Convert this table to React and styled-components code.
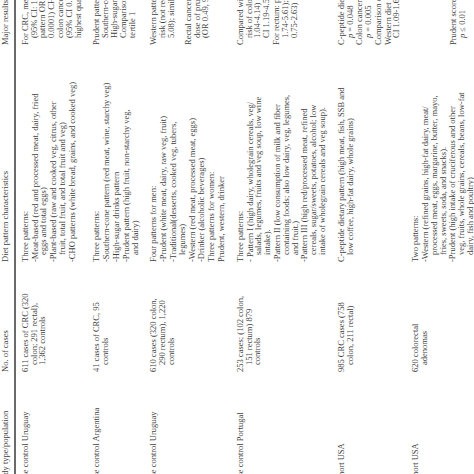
import React from 'react';
import styled, { createGlobalStyle } from 'styled-components';

const Global = createGlobalStyle`
  html, body { margin: 0; padding: 0; background: #fff; }
  body { width: 474px; height: 474px; overflow: hidden; }
`;

const Page = styled.div`
  width: 474px;
  height: 474px;
  overflow: hidden;
  background: #fff;
`;

const Rotated = styled.div`
  width: 640px;
  transform-origin: 0 0;
  transform: translate(-2px, 486px) rotate(-90deg);
  font-family: "Liberation Serif", "Times New Roman", serif;
  font-size: 8.5px;
  line-height: 8.8px;
  color: #3f3f3f;
`;

const Row = styled.div`
  display: grid;
  grid-template-columns: 114px 110px 217px 199px;
  padding: ${p => (p.$head ? '3px 0 4px' : '5px 0')};
  border-bottom: ${p => (p.$head ? '2px solid #6a6a6a' : 'none')};
`;

const Cell = styled.div`
  min-width: 0;
  padding-top: ${p => p.$offset || 0}px;
`;

const Para = styled.div`
  margin-top: ${p => (p.$first ? 0 : p.$gap)}px;
`;

const Line = styled.div`
  white-space: nowrap;
  padding-left: ${p => (p.$indent ? '7px' : '0')};
`;

const I = styled.i`
  font-style: italic;
`;

function Text({ paras, gap = 1 }) {
  return paras.map((lines, i) => (
    <Para key={i} $first={i === 0} $gap={gap}>
      {lines.map((l, j) => (
        <Line key={j} $indent={j > 0}>
          {l}
        </Line>
      ))}
    </Para>
  ));
}

const rows = [
  {
    study: [['Case control Uruguay']],
    cases: [['611 cases of CRC (320', 'colon; 291 rectal),', '1,362 controls']],
    diet: [
      ['Three patterns:'],
      ['-Meat-based (red and processed meat, dairy, fried', 'eggs and total eggs)'],
      ['-Plant-based (raw and cooked veg, citrus, other', 'fruit, total fruit, and total fruit and veg)'],
      ['-CHO patterns (white bread, grains, and cooked veg)'],
    ],
    major: [
      [
        'For CRC, meat-based pattern OR 1.32',
        '(95% CI: 1.05-1.66); plant-based',
        'pattern OR 0.56 (95% CI 0.44-0.71; p <',
        '0.0001) CHO pattern not associated;',
        'colon cancer: plant-based OR 0.52',
        '(95% CI 0.38-0.71) comparing',
        'highest quartile vs. lowest',
      ],
    ],
  },
  {
    study: [['Case control Argentina']],
    cases: [['41 cases of CRC, 95', 'controls']],
    diet: [
      ['Three patterns:'],
      ['-Southern-cone pattern (red meat, wine, starchy veg)'],
      ['-High-sugar drinks pattern'],
      ['-Prudent pattern (high fruit, non-starchy veg,', 'and dairy)'],
    ],
    major: [
      [
        'Prudent pattern protective (OR 0.29);',
        'Southern-cone pattern OR 1.25;',
        'High-sugar drinks OR 1.68;',
        'Comparison tertile 3 vs.',
        'tertile 1',
      ],
    ],
  },
  {
    study: [['Case control Uruguay']],
    cases: [['610 cases (320 colon,', '290 rectum), 1,220', 'controls']],
    diet: [
      ['Four patterns for men:'],
      ['-Prudent (white meat, dairy, raw veg, fruit)'],
      ['-Traditional(desserts, cooked veg, tubers,', 'legumes)'],
      ['-Western (red meat, processed meat, eggs)'],
      ['-Drinker (alcoholic beverages)'],
      ['Three patterns for women:'],
      ['Prudent, western, drinker'],
    ],
    majorGap: 8,
    major: [
      ['Western pattern increased rectal', 'risk (not rectal OR 2.05, 1.10-', '5.08); similar in women'],
      ['Rectal cancer: inverse', 'dose of prudent pattern', '(OR 0.49, 95% CI 0.29-0.83)'],
    ],
  },
  {
    study: [['Case control Portugal']],
    cases: [['253 cases; (102 colon,', '151 rectum) 879', 'controls']],
    diet: [
      ['Three patterns:'],
      ['- Pattern I (high dairy, wholegrain cereals, veg/', 'salads, legumes, fruits and veg soup, low wine', 'intake).'],
      ['-Pattern II (low consumption of milk and fiber', 'containing foods; also low dairy, veg, legumes,', 'and fruit.)'],
      ['-Pattern III (high red/processed meat, refined', 'cereals, sugar/sweets, potatoes, alcohol; low', 'intake of wholegrain cereals and veg soup).'],
    ],
    major: [
      [
        'Compared with pattern I, higher',
        'risk of colon cancer (OR 2.08, 95% CI',
        '1.04-4.14) pattern III (OR 2.33, 95%',
        'CI 1.19-4.57)',
      ],
      ['For rectum: pattern II (OR 3.12,', '1.74-5.61); pattern III (OR 1.41,', '0.75-2.63)'],
    ],
  },
  {
    study: [['Cohort USA']],
    cases: [['985 CRC cases (758', 'colon, 211 rectal)']],
    diet: [['C-peptide dietary pattern (high meat, fish, SSB and', 'low coffee, high-fat dairy, whole grains)']],
    major: [
      ['C-peptide dietary pattern RR 1.29,', <><I>p</I> = 0.048</>],
      ['Colon cancer RR 1.43,', <><I>p</I> = 0.005</>],
      ['Comparison of extreme quintiles'],
      ['Western diet and CRC RR 1.32 (95%', 'CI 1.09-1.60)'],
    ],
  },
  {
    study: [['Cohort USA']],
    cases: [['620 colorectal', 'adenomas']],
    diet: [
      ['Two patterns:'],
      ['-Western (refined grains, high-fat dairy, meat/', 'processed meat, eggs, margarine, butter, mayo,', 'fries, sweets, soda, and snacks).'],
      ['-Prudent (high intake of cruciferous and other', 'veg, fruits, whole grains, cereals, beans, low-fat', 'dairy, fish and poultry)'],
    ],
    majorOffset: 38,
    major: [['Prudent score inversely associated,', <><I>p</I> ≤ 0.01</>]],
  },
];

export default function App() {
  return (
    <>
      <Global />
      <Page>
        <Rotated>
          <Row $head>
            <Cell>Study type/population</Cell>
            <Cell>No. of cases</Cell>
            <Cell>Diet pattern characteristics</Cell>
            <Cell>Major results</Cell>
          </Row>
          {rows.map((r, i) => (
            <Row key={i}>
              <Cell><Text paras={r.study} /></Cell>
              <Cell><Text paras={r.cases} /></Cell>
              <Cell><Text paras={r.diet} /></Cell>
              <Cell $offset={r.majorOffset}>
                <Text paras={r.major} gap={r.majorGap ?? 1} />
              </Cell>
            </Row>
          ))}
        </Rotated>
      </Page>
    </>
  );
}
